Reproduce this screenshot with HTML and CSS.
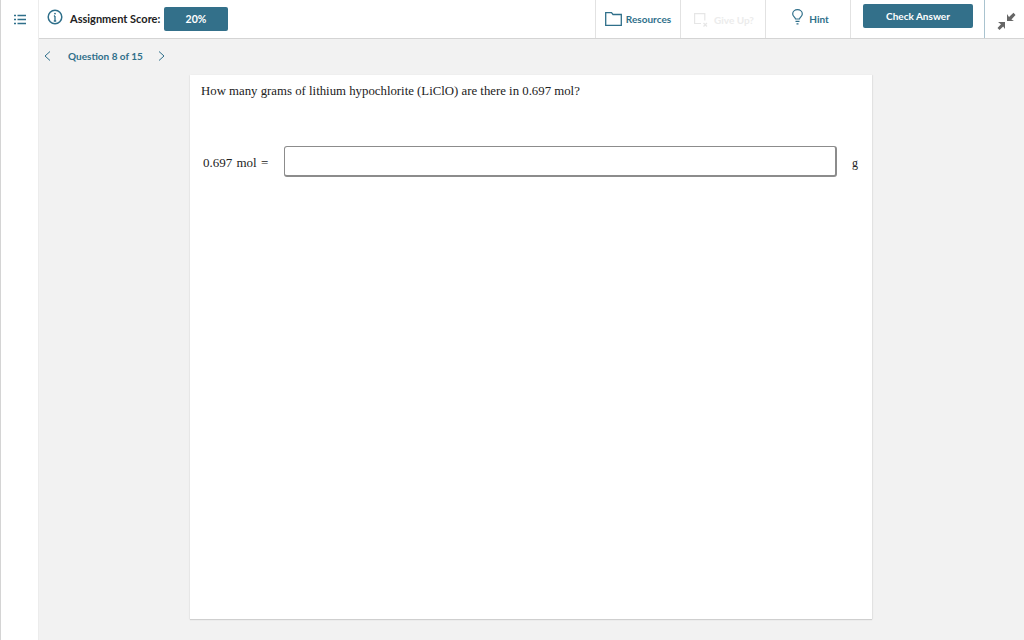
FILE: index.html
```html
<!DOCTYPE html>
<html lang="en">
<head>
<meta charset="utf-8">
<title>Question 8 of 15</title>
<link rel="stylesheet" href="styles.css">
</head>
<body>
<div class="app">
  <aside class="rail">
    <div class="rail-top">
      <svg width="12" height="11" viewBox="0 0 12 11" fill="none" stroke="#2f6f8a" stroke-width="1.4"><path d="M0 1.500h2M3.500 1.500H12M0 5.500h2M3.500 5.500H12M0 9.500h2M3.500 9.500H12"/></svg>
    </div>
  </aside>
  <div class="main">
    <header class="topbar">
      <div class="score">
        <svg class="info" width="16" height="16" viewBox="0 0 16 16" fill="none" stroke="#2f6f8a"><circle cx="8" cy="8" r="6.800" stroke-width="1.500"/><path d="M8 7v5M6.800 12h2.400M6.900 7H8" stroke-width="1.300"/><circle cx="8" cy="4.600" r=".9" fill="#2f6f8a" stroke="none"/></svg>
        <span class="score-label">Assignment Score:</span>
        <span class="score-pill">20%</span>
      </div>
      <div class="tools">
        <div class="tool">
          <svg width="17" height="14" viewBox="0 0 17 14" fill="none" stroke="#2f6f8a" stroke-width="1.300"><path d="M.7 13.300V.7h5.800l1.500 1.800h8.300v10.800z"/></svg>
          <span>Resources</span>
        </div>
        <div class="tool tool-off">
          <svg width="14" height="14" viewBox="0 0 14 14" fill="none" stroke="#e6e6e6" stroke-width="1.200"><path d="M7 10.500H.6V.6h10.200v7M9.500 10l3.500 3.500M13 10l-3.500 3.500"/></svg>
          <span>Give Up?</span>
        </div>
        <div class="tool tool-hint">
          <svg class="bulb" width="11" height="16" viewBox="0 0 11 16" fill="none" stroke="#2f6f8a" stroke-width="1.200"><path d="M3.500 10C3.200 8 .7 7.300.7 4.900a4.800 4.300 0 0 1 9.600 0C10.300 7.300 7.800 8 7.500 10zM3.500 12.300h4M4.500 14.800h2"/></svg>
          <span>Hint</span>
        </div>
      </div>
      <div class="check-wrap"><button class="check" type="button">Check Answer</button></div>
      <div class="collapse">
        <svg width="19" height="18" viewBox="0 0 19 18" fill="none"><path d="M10 2v7h7l-2.600-1.500L18.500 3 16.500.8 12 5z" fill="#666"/><path d="M1 10h7v7l-1.800-2.400L2.500 18 .5 16l3.500-3.800z" fill="#666"/></svg>
      </div>
    </header>
    <div class="content">
      <nav class="pager">
        <svg width="7" height="10" viewBox="0 0 7 10" fill="none" stroke="#2f6f8a"><path d="M6 .5 1 5l5 4.500"/></svg>
        <span class="pager-text">Question 8 of 15</span>
        <svg width="7" height="10" viewBox="0 0 7 10" fill="none" stroke="#2f6f8a"><path d="M1 .5 6 5 1 9.500"/></svg>
      </nav>
      <section class="card">
        <p class="question">How many grams of lithium hypochlorite (LiClO) are there in 0.697 mol?</p>
        <div class="answer">
          <span class="lhs">0.697 mol =</span>
          <input class="field" type="text" aria-label="answer">
          <span class="unit">g</span>
        </div>
      </section>
    </div>
  </div>
</div>
</body>
</html>
```
FILE: styles.css
```css
* { box-sizing: border-box; }
html, body { margin: 0; height: 100%; }
body { background: #f2f2f2; font-family: Lato, "Open Sans", sans-serif; overflow: hidden; }
.app { display: flex; height: 640px; }
.rail { width: 39px; flex: none; background: #fff; border-left: 1px solid #d4d4d4; border-right: 1px solid #ececec; }
.rail-top { height: 38px; display: flex; align-items: center; padding-left: 13px; }
.main { flex: 1; display: flex; flex-direction: column; min-width: 0; }
.topbar { height: 39px; flex: none; display: flex; background: #fff; border-bottom: 1px solid #d4d4d4; }
.score { display: flex; align-items: flex-start; width: 556px; flex: none; padding: 7px 0 0 8px; }
.info { margin-top: 2px; }
.score-label { margin-left: 7px; font-size: 11px; font-weight: 700; color: #222; line-height: 23px; width: 94px; white-space: nowrap; }
.score-pill { width: 64px; height: 24px; background: #33708a; color: #fff; border-radius: 2px; font-size: 10.500px; font-weight: 700; line-height: 24px; text-align: center; }
.tools { display: flex; flex: none; }
.tool { width: 85px; height: 38px; border-left: 1px solid #e2e2e2; display: flex; align-items: center; justify-content: center; gap: 4px; font-size: 10px; font-weight: 700; color: #2f6f8a; }
.tool-off { color: #ececec; gap: 6px; padding: 1px 0 0 2px; }
.tool-hint { gap: 6px; padding-left: 5px; }
.bulb { margin-top: -4px; }
.check-wrap { width: 134px; flex: none; border-left: 1px solid #e2e2e2; padding: 4px 0 0 12px; }
.check { width: 110px; height: 24px; background: #33708a; color: #fff; border: 0; border-radius: 2px; font: 700 10px Lato, "Open Sans", sans-serif; padding: 0; display: block; }
.collapse { flex: 1; border-left: 1px solid #a9c3cf; padding: 12px 0 0 12px; }
.content { flex: 1; display: flex; min-height: 0; }
.pager { width: 151px; flex: none; display: flex; align-items: flex-start; padding: 11px 0 0 5px; color: #2f6f8a; }
.pager svg { margin-top: 1px; }
.pager-text { font-size: 10px; font-weight: 700; margin: 0 15px 0 17px; line-height: 13px; white-space: nowrap; }
.card { width: 682px; height: 544px; margin-top: 36px; background: #fff; box-shadow: 0 1px 1px #cfcfcf, 1px 0 1px #e6e6e6, -1px 0 1px #ececec; padding: 8px 11px 0; font-family: "Liberation Serif", serif; color: #222; }
.question { margin: 0; font-size: 12.800px; line-height: 16px; }
.answer { display: flex; align-items: center; margin-top: 47px; }
.lhs { width: 83px; flex: none; padding: 3px 0 0 2px; font-size: 13px; word-spacing: 1px; }
.field { width: 553px; height: 31px; flex: none; border: 1px solid #8c8c8c; border-bottom-width: 2px; border-right-width: 2px; border-radius: 3px; background: #fff; }
.unit { margin: 4px 0 0 15px; font-size: 12px; }
```
